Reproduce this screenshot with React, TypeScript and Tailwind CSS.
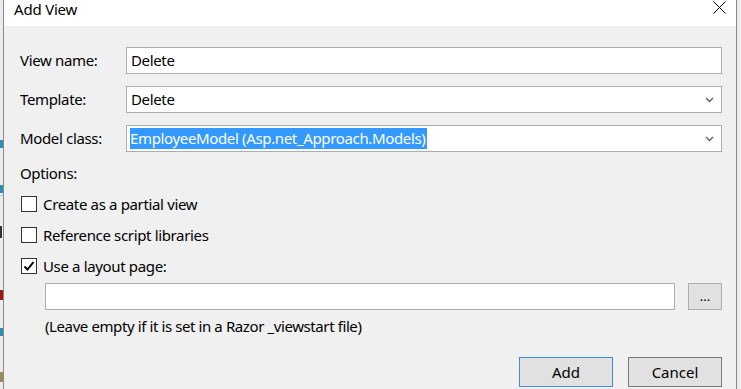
import React from 'react'

const FONT = { fontFamily: '"Noto Sans", "Open Sans", Arial, sans-serif' }

function Chevron() {
  return (
    <svg width="9" height="6" viewBox="0 0 9 6" className="shrink-0">
      <path d="M1 1 L4.5 4.5 L8 1" fill="none" stroke="#606060" strokeWidth="1.4" />
    </svg>
  )
}

function Field(props: { label: string; value: string; select?: boolean; selected?: boolean }) {
  return (
    <div className="flex h-[27px] items-center">
      <div className="w-[106px] shrink-0 text-[15px] tracking-[-0.35px] text-black">{props.label}</div>
      <div className="flex h-[27px] flex-1 items-center border border-[#adadad] bg-white pl-[3px] pr-[7px]">
        <span
          className={
            props.selected
              ? 'flex h-[21px] items-center bg-[#3399ff] pr-[2px] text-[15px] tracking-[-0.35px] text-white'
              : 'pl-[1px] text-[15px] tracking-[-0.35px] text-black'
          }
        >
          {props.value}
        </span>
        <div className="flex-1" />
        {props.select ? <Chevron /> : null}
      </div>
    </div>
  )
}

function Check(props: { label: string; checked?: boolean }) {
  return (
    <div className="flex h-[16px] items-center gap-[6px]">
      <div className="flex h-[16px] w-[16px] items-center justify-center border border-[#333333] bg-white">
        {props.checked ? (
          <svg width="12" height="12" viewBox="0 0 12 12">
            <path d="M1.5 6.5 L4.5 9.5 L10.5 2" fill="none" stroke="#000" strokeWidth="2" />
          </svg>
        ) : null}
      </div>
      <span className="text-[15px] tracking-[-0.35px] text-black">{props.label}</span>
    </div>
  )
}

export default function App() {
  return (
    <div className="flex h-[389px] w-[741px] overflow-hidden bg-[#f0f0f0]" style={FONT}>
      {/* sliver of the editor behind the dialog */}
      <div className="relative w-[3px] shrink-0 bg-[#ececec]">
        <div className="absolute left-0 top-[140px] h-[8px] w-[3px] bg-[#2b91af]" />
        <div className="absolute left-0 top-[195px] h-px w-[3px] bg-[#bdbdbd]" />
        <div className="absolute left-0 top-[185px] h-[8px] w-[3px] bg-[#2b91af]" />
        <div className="absolute left-0 top-[226px] h-[12px] w-[2px] bg-[#333]" />
        <div className="absolute left-0 top-[290px] h-[10px] w-[3px] bg-[#a31515]" />
        <div className="absolute left-0 top-[328px] h-[8px] w-[3px] bg-[#2b91af]" />
        <div className="absolute left-0 top-[372px] h-[10px] w-[3px] bg-[#a0895a]" />
      </div>
      <div className="w-px shrink-0 bg-[#8a8a8a]" />

      <div className="flex flex-1 flex-col">
        <div className="flex h-[26px] shrink-0 items-start bg-white">
          <div className="pl-[10px] text-[15px] leading-[18px] tracking-[-0.2px] text-black">Add View</div>
          <div className="flex-1" />
          <svg width="13" height="13" viewBox="0 0 13 13" className="mr-[10px] mt-[1px]">
            <path d="M0.5 0.5 L12.5 12.5 M12.5 0.5 L0.5 12.5" stroke="#000" strokeWidth="1" />
          </svg>
        </div>

        <div className="flex flex-1 flex-col pl-[16px] pr-[14px] pt-[21px]">
          <div className="flex flex-col gap-[12px]">
            <Field label="View name:" value="Delete" />
            <Field label="Template:" value="Delete" select />
            <Field label="Model class:" value="EmployeeModel (Asp.net_Approach.Models)" select selected />
          </div>

          <div className="mt-[11px] text-[15px] leading-[20px] tracking-[-0.35px] text-black">Options:</div>

          <div className="mt-[13px] flex flex-col gap-[15px] pl-[1px]">
            <Check label="Create as a partial view" />
            <Check label="Reference script libraries" />
            <Check label="Use a layout page:" checked />
          </div>

          <div className="mt-[9px] flex gap-[13px] pl-[25px]">
            <div className="h-[27px] flex-1 border border-[#adadad] bg-white" />
            <div className="flex h-[27px] w-[34px] items-center justify-center border border-[#adadad] bg-[#e1e1e1] text-[13px] text-black">
              ...
            </div>
          </div>
          <div className="mt-[6px] pl-[25px] text-[15px] leading-[20px] tracking-[-0.4px] text-black">
            (Leave empty if it is set in a Razor _viewstart file)
          </div>

          <div className="mt-[21px] flex justify-end gap-[15px]">
            <div className="flex h-[30px] w-[94px] items-center justify-center border border-[#3c8ce4] bg-[#e1e1e1] text-[15px] text-black">
              Add
            </div>
            <div className="flex h-[30px] w-[94px] items-center justify-center border border-[#7a7a7a] bg-[#e1e1e1] text-[15px] text-black">
              Cancel
            </div>
          </div>
        </div>
      </div>

      <div className="w-px shrink-0 bg-[#8a8a8a]" />
      <div className="w-[4px] shrink-0 bg-[#ececec]" />
    </div>
  )
}
